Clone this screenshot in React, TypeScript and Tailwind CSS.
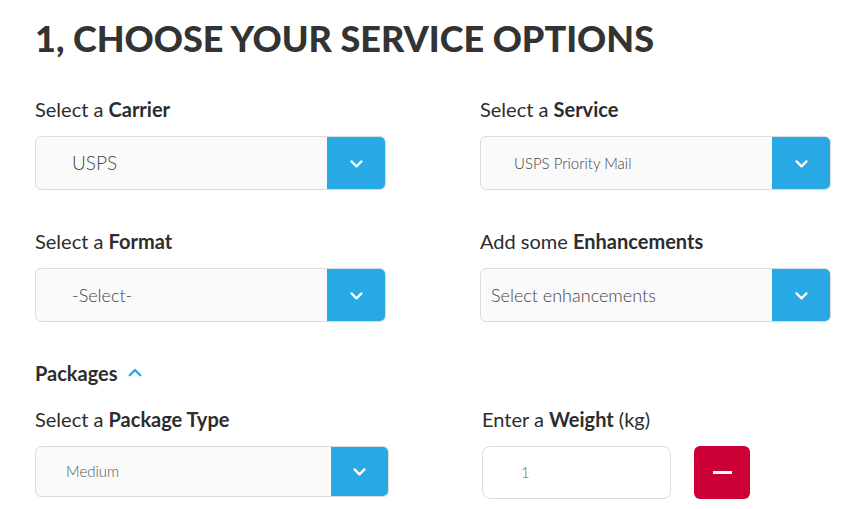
import React from "react";

const font = { fontFamily: "Lato, 'Open Sans', sans-serif" };

const Chevron = ({ up = false, className = "" }: { up?: boolean; className?: string }) => (
  <svg
    viewBox="0 0 24 24"
    className={className}
    fill="none"
    stroke="currentColor"
    strokeWidth={3.2}
    strokeLinecap="round"
    strokeLinejoin="round"
  >
    <path d={up ? "M5 15l7-7 7 7" : "M5 9l7 7 7-7"} />
  </svg>
);

type FieldProps = {
  label: React.ReactNode;
  children: React.ReactNode;
};

const Field = ({ label, children }: FieldProps) => (
  <div className="flex flex-col">
    <div className="h-[26px] text-[20px] leading-[26px] text-[#2d2d2d]">{label}</div>
    <div className="mt-[14px]">{children}</div>
  </div>
);

type SelectProps = {
  value: string;
  textClass: string;
  btnClass?: string;
  heightClass?: string;
};

const FakeSelect = ({ value, textClass, btnClass = "w-[58px]", heightClass = "h-[54px]" }: SelectProps) => (
  <div
    className={`flex ${heightClass} overflow-hidden rounded-[6px] border border-[#dcdcdc] bg-[#fafafa]`}
  >
    <div className={`flex flex-1 items-center font-light ${textClass}`}>{value}</div>
    <div className={`flex ${btnClass} items-center justify-center bg-[#29a8e6] text-white`}>
      <Chevron className="h-[17px] w-[17px]" />
    </div>
  </div>
);

export default function App() {
  return (
    <div className="min-h-screen bg-white pl-[35px] pt-[14px]" style={font}>
      <h1 className="text-[36px] font-black uppercase leading-[48px] text-[#333333]">
        1, Choose your service options
      </h1>

      <div className="mt-[34px] grid grid-cols-[351px_351px] gap-x-[94px] gap-y-[38px]">
        <Field
          label={
            <>
              Select a <b className="font-bold">Carrier</b>
            </>
          }
        >
          <FakeSelect value="USPS" textClass="pl-[36px] text-[19px] text-[#444]" />
        </Field>
        <Field
          label={
            <>
              Select a <b className="font-bold">Service</b>
            </>
          }
        >
          <FakeSelect value="USPS Priority Mail" textClass="pl-[33px] text-[15px] text-[#444]" />
        </Field>
        <Field
          label={
            <>
              Select a <b className="font-bold">Format</b>
            </>
          }
        >
          <FakeSelect value="-Select-" textClass="pl-[36px] text-[18px] text-[#444]" />
        </Field>
        <Field
          label={
            <>
              Add some <b className="font-bold">Enhancements</b>
            </>
          }
        >
          <FakeSelect value="Select enhancements" textClass="pl-[10px] text-[18px] text-[#444]" />
        </Field>
      </div>

      <div className="mt-[38px] flex items-center gap-[8px] text-[20px] font-bold leading-[26px] text-[#2d2d2d]">
        Packages
        <Chevron up className="h-[18px] w-[18px] text-[#29a8e6]" />
      </div>

      <div className="mt-[20px] flex gap-x-[93px]">
        <div className="w-[354px]">
          <Field
            label={
              <>
                Select a <b className="font-bold">Package Type</b>
              </>
            }
          >
            <FakeSelect
              value="Medium"
              heightClass="h-[51px]"
              btnClass="w-[57px]"
              textClass="pl-[30px] text-[15px] text-[#555]"
            />
          </Field>
        </div>
        <div>
          <Field
            label={
              <>
                Enter a <b className="font-bold">Weight</b> (kg)
              </>
            }
          >
            <div className="flex items-center gap-[23px]">
              <div className="flex h-[53px] w-[189px] items-center rounded-[8px] border border-[#dcdcdc] bg-white pl-[38px] text-[15px] font-light text-[#7a6a4a]">
                1
              </div>
              <button className="flex h-[53px] w-[56px] items-center justify-center rounded-[6px] bg-[#cc0036]">
                <span className="block h-[3px] w-[19px] bg-white" />
              </button>
            </div>
          </Field>
        </div>
      </div>
    </div>
  );
}
